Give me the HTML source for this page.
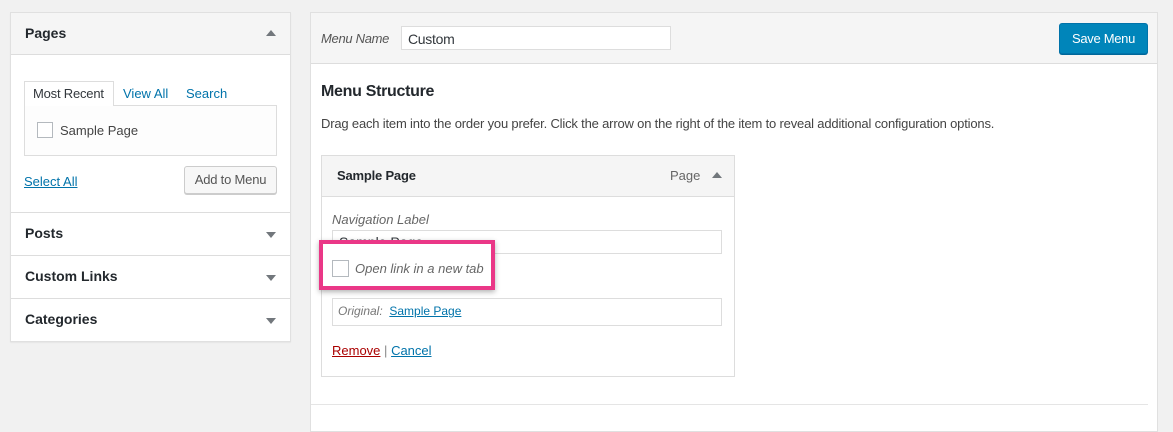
<!DOCTYPE html>
<html><head><style>
*{box-sizing:border-box;margin:0;padding:0}
body{width:1173px;height:423px;background:#f1f1f1;font-family:"Liberation Sans",sans-serif;font-size:13px;color:#444;position:relative;overflow:hidden}
.a{position:absolute}
.tri-up{width:0;height:0;border-left:5px solid transparent;border-right:5px solid transparent;border-bottom:6px solid #72777c}
.tri-dn{width:0;height:0;border-left:5px solid transparent;border-right:5px solid transparent;border-top:6px solid #72777c}
a{color:#0073aa}
.h{font-weight:bold;font-size:14px;color:#23282d}
</style></head><body>
<!-- left panel -->
<div class="a" style="left:10px;top:12px;width:281px;height:330px;background:#fff;border:1px solid #e0e0e0;box-shadow:0 1px 1px rgba(0,0,0,.05)"></div>
<div class="a" style="left:11px;top:13px;width:279px;height:42px;background:#f5f5f5;border-bottom:1px solid #ddd"></div>
<div class="a h" style="left:25px;top:25px">Pages</div>
<div class="a tri-up" style="left:266px;top:30px"></div>
<div class="a" style="left:24px;top:81px;width:90px;height:25px;border:1px solid #ddd;border-bottom:none;background:#fff;z-index:2"></div>
<div class="a" style="left:33px;top:86px;color:#32373c;z-index:3;letter-spacing:-0.2px">Most Recent</div>
<div class="a" style="left:123px;top:86px;color:#0073aa">View All</div>
<div class="a" style="left:186px;top:86px;color:#0073aa">Search</div>
<div class="a" style="left:24px;top:105px;width:253px;height:51px;border:1px solid #ddd;background:#fdfdfd"></div>
<div class="a" style="left:37px;top:122px;width:16px;height:16px;border:1px solid #b4b9be;background:#fff"></div>
<div class="a" style="left:60px;top:123px;color:#444">Sample Page</div>
<div class="a" style="left:24px;top:174px"><a href="#">Select All</a></div>
<div class="a" style="left:184px;top:166px;width:93px;height:28px;border:1px solid #ccc;border-radius:3px;background:#f7f7f7;box-shadow:0 1px 0 #ccc;color:#555;text-align:center;line-height:26px;letter-spacing:-0.2px">Add to Menu</div>
<div class="a" style="left:11px;top:212px;width:279px;border-top:1px solid #ddd"></div>
<div class="a h" style="left:25px;top:225px">Posts</div>
<div class="a tri-dn" style="left:266px;top:232px"></div>
<div class="a" style="left:11px;top:255px;width:279px;border-top:1px solid #ddd"></div>
<div class="a h" style="left:25px;top:268px">Custom Links</div>
<div class="a tri-dn" style="left:266px;top:275px"></div>
<div class="a" style="left:11px;top:298px;width:279px;border-top:1px solid #ddd"></div>
<div class="a h" style="left:25px;top:311px">Categories</div>
<div class="a tri-dn" style="left:266px;top:318px"></div>

<!-- main panel -->
<div class="a" style="left:310px;top:12px;width:848px;height:420px;background:#fff;border:1px solid #e0e0e0"></div>
<div class="a" style="left:311px;top:13px;width:846px;height:51px;background:#f5f5f5;border-bottom:1px solid #ddd"></div>
<div class="a" style="left:321px;top:31px;font-style:italic;color:#555;letter-spacing:-0.3px">Menu Name</div>
<div class="a" style="left:401px;top:26px;width:270px;height:24px;border:1px solid #ddd;background:#fff;font-size:14px;color:#32373c;padding:4px 6px;letter-spacing:-0.3px">Custom</div>
<div class="a" style="left:1059px;top:23px;width:89px;height:31px;background:#0085ba;border:1px solid #0073aa;border-radius:3px;box-shadow:0 1px 0 #006799;color:#fff;text-align:center;line-height:29px;letter-spacing:-0.3px">Save Menu</div>
<div class="a" style="left:321px;top:83px;font-weight:bold;font-size:16px;color:#23282d;letter-spacing:-0.3px">Menu Structure</div>
<div class="a" style="left:321px;top:116px;color:#444;letter-spacing:-0.18px">Drag each item into the order you prefer. Click the arrow on the right of the item to reveal additional configuration options.</div>

<div class="a" style="left:321px;top:155px;width:414px;height:222px;border:1px solid #ddd;background:#fff"></div>
<div class="a" style="left:322px;top:156px;width:412px;height:41px;background:#f5f5f5;border-bottom:1px solid #ddd"></div>
<div class="a" style="left:337px;top:168px;font-weight:bold;color:#23282d;letter-spacing:-0.2px">Sample Page</div>
<div class="a" style="left:670px;top:168px;color:#666">Page</div>
<div class="a tri-up" style="left:712px;top:172px"></div>
<div class="a" style="left:332px;top:212px;font-style:italic;color:#666">Navigation Label</div>
<div class="a" style="left:332px;top:230px;width:390px;height:24px;border:1px solid #ddd;background:#fff;overflow:hidden;padding:3px 6px;font-size:14px;color:#32373c">Sample Page</div>
<div class="a" style="left:319px;top:240px;width:176px;height:50px;border:4px solid #ea3787;background:#fff;box-shadow:0 2px 5px rgba(0,0,0,.3)"></div>
<div class="a" style="left:332px;top:260px;width:17px;height:17px;border:1px solid #b4b9be;background:#fff"></div>
<div class="a" style="left:355px;top:261px;font-style:italic;color:#666">Open link in a new tab</div>
<div class="a" style="left:332px;top:298px;width:390px;height:28px;border:1px solid #ddd;background:#fff"></div>
<div class="a" style="left:338px;top:304px;font-size:12px"><i style="color:#777">Original:</i>&nbsp; <a href="#">Sample Page</a></div>
<div class="a" style="left:332px;top:343px"><a href="#" style="color:#a00">Remove</a> <span style="color:#888">|</span> <a href="#">Cancel</a></div>
<div class="a" style="left:311px;top:404px;width:837px;border-top:1px solid #e5e5e5"></div>
</body></html>
